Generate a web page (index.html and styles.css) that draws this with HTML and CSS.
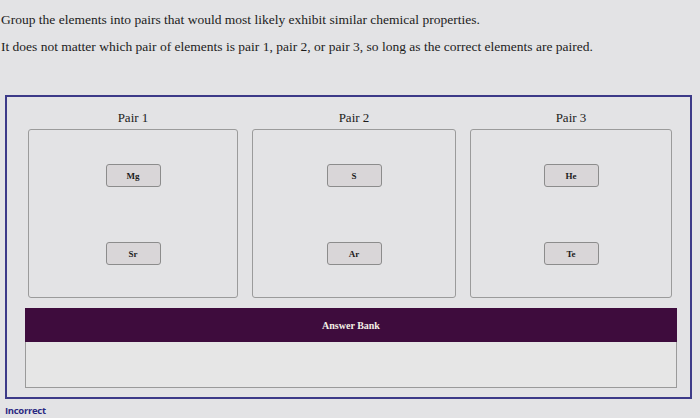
FILE: index.html
```html
<!DOCTYPE html>
<html>
<head>
<meta charset="utf-8">
<link rel="stylesheet" href="styles.css">
</head>
<body>
<div class="page">
  <p class="q q1">Group the elements into pairs that would most likely exhibit similar chemical properties.</p>
  <p class="q q2">It does not matter which pair of elements is pair 1, pair 2, or pair 3, so long as the correct elements are paired.</p>
  <div class="outer">
    <div class="pairs">
      <div class="pair">
        <div class="label">Pair 1</div>
        <div class="box">
          <div class="chip">Mg</div>
          <div class="chip">Sr</div>
        </div>
      </div>
      <div class="pair">
        <div class="label">Pair 2</div>
        <div class="box">
          <div class="chip">S</div>
          <div class="chip">Ar</div>
        </div>
      </div>
      <div class="pair">
        <div class="label">Pair 3</div>
        <div class="box">
          <div class="chip">He</div>
          <div class="chip">Te</div>
        </div>
      </div>
    </div>
    <div class="bank">
      <div class="bank-head">Answer Bank</div>
      <div class="bank-body"></div>
    </div>
  </div>
  <div class="status">Incorrect</div>
</div>
</body>
</html>
```
FILE: styles.css
```css
html, body {
  margin: 0;
  padding: 0;
  background: #e3e3e5;
}
body {
  width: 700px;
  height: 418px;
  overflow: hidden;
  font-family: "Liberation Serif", "Times New Roman", serif;
  color: #1c1c1c;
}
.q {
  margin: 0;
  font-size: 13.5px;
  line-height: 14px;
  padding-left: 1px;
}
.q1 {
  padding-top: 13px;
}
.q2 {
  padding-top: 13px;
}
.outer {
  margin: 41px 8px 0 5px;
  height: 300px;
  border: 2px solid #3c3a88;
  display: flex;
  flex-direction: column;
}
.pairs {
  display: grid;
  grid-template-columns: 210px 204px 202px;
  column-gap: 14px;
  padding: 0 0 0 21px;
}
.pair {
  display: flex;
  flex-direction: column;
}
.label {
  text-align: center;
  font-size: 13px;
  line-height: 14px;
  padding-top: 14px;
  height: 18px;
}
.box {
  height: 169px;
  border: 1.5px solid #9b9b9b;
  border-radius: 3px;
  display: flex;
  flex-direction: column;
  align-items: center;
  padding-top: 34px;
  gap: 55px;
  box-sizing: border-box;
}
.chip {
  width: 55px;
  height: 23px;
  box-sizing: border-box;
  border: 1px solid #8c8c8c;
  border-radius: 3px;
  background: #d9d6d8;
  font-size: 9px;
  font-weight: bold;
  display: flex;
  align-items: center;
  justify-content: center;
}
.bank {
  margin: 10px 13px 0 18px;
}
.bank-head {
  height: 34px;
  background: #3e0c3d;
  color: #f4efe6;
  font-weight: bold;
  font-size: 10px;
  display: flex;
  align-items: center;
  justify-content: center;
}
.bank-body {
  height: 46px;
  border: 1px solid #9a9a9a;
  border-top: none;
  box-sizing: border-box;
  background: #e6e6e6;
}
.status {
  font-family: "Open Sans", "Noto Sans", sans-serif;
  font-size: 9.5px;
  font-weight: bold;
  color: #2b2a82;
  padding: 5px 0 0 5px;
  letter-spacing: -0.3px;
}
```
